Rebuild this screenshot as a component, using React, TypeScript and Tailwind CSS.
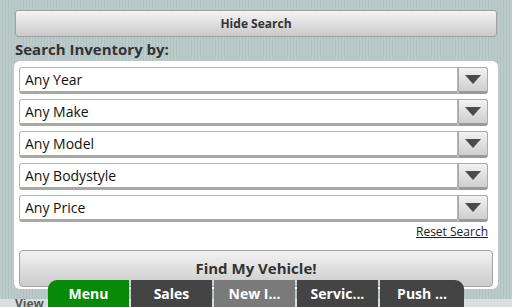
const fields = ["Any Year", "Any Make", "Any Model", "Any Bodystyle", "Any Price"];

const tabs = [
  { label: "Menu", cls: "bg-[#078a07] rounded-tl-[9px]" },
  { label: "Sales", cls: "bg-[#444444]" },
  { label: "New I...", cls: "bg-[#7a7a7a]" },
  { label: "Servic...", cls: "bg-[#444444]" },
  { label: "Push ...", cls: "bg-[#444444] rounded-tr-[9px] w-[84px]" },
];

function SelectBox({ label }: { label: string }) {
  return (
    <div className="flex h-[27px]">
      {/* text part of the select */}
      <div className="flex-1 flex items-center pl-[5px] bg-white border border-[#b4b4b4] border-b-[3px] border-b-[#a8a8a8] rounded-l-[3px] text-[14px] text-[#111]">
        {label}
      </div>
      {/* dropdown arrow button */}
      <div className="w-[30px] flex items-center justify-center bg-gradient-to-b from-[#f2f2f2] to-[#cfcfcf] border border-[#a9a9a9] border-b-[3px] border-b-[#9a9a9a] rounded-r-[3px]">
        <svg width="16" height="9" viewBox="0 0 16 9">
          <path d="M0 0 H16 L8 9 Z" fill="#4a4a4a" />
        </svg>
      </div>
    </div>
  );
}

export default function App() {
  return (
    <div
      className="relative w-[512px] h-[307px] overflow-hidden bg-[#b9c7c7] bg-[repeating-linear-gradient(90deg,#bccaca_0px,#bccaca_2px,#b2c1c1_2px,#b2c1c1_3px)] font-['Open_Sans','DejaVu_Sans',sans-serif]"
    >
      <div className="px-[15px] pt-[10px]">
        <div className="h-[27px] flex items-center justify-center rounded-[3px] border border-[#9f9f9f] bg-gradient-to-b from-[#f5f5f5] to-[#c9c9c9] text-[12px] font-bold text-[#333]">
          Hide Search
        </div>
        <div className="mt-[2px] text-[15px] font-bold text-[#333] leading-[21px]">
          Search Inventory by:
        </div>
      </div>

      <div className="mx-[14px] mt-[1px] h-[228px] bg-white rounded-[6px] pl-[5px] pr-[10px] pt-[6px]">
        <div className="flex flex-col gap-[5px]">
          {fields.map((f) => (
            <SelectBox key={f} label={f} />
          ))}
        </div>
        <div className="flex justify-end mt-[2px]">
          <span className="text-[12px] text-[#222] underline leading-[16px]">Reset Search</span>
        </div>
        <div className="mt-[10px] -mr-[5px] h-[37px] flex items-center justify-center rounded-[4px] border border-[#a3a3a3] bg-gradient-to-b from-[#f3f3f3] to-[#cbcbcb] text-[15px] font-bold text-[#333]">
          Find My Vehicle!
        </div>
      </div>

      {/* bottom strip partially hidden behind tabs */}
      <div className="absolute left-0 right-0 top-[299px] h-[8px] bg-[#d9dfdf] overflow-hidden">
        <span className="absolute left-[15px] -top-[4px] text-[12px] font-bold text-[#555]">View</span>
      </div>

      {/* tab bar */}
      <div className="absolute left-[48px] top-[280px] flex gap-[2px]">
        {tabs.map((t) => (
          <div
            key={t.label}
            className={`h-[27px] w-[81px] flex items-center justify-center text-white text-[14px] font-bold ${t.cls}`}
          >
            {t.label}
          </div>
        ))}
      </div>
    </div>
  );
}
